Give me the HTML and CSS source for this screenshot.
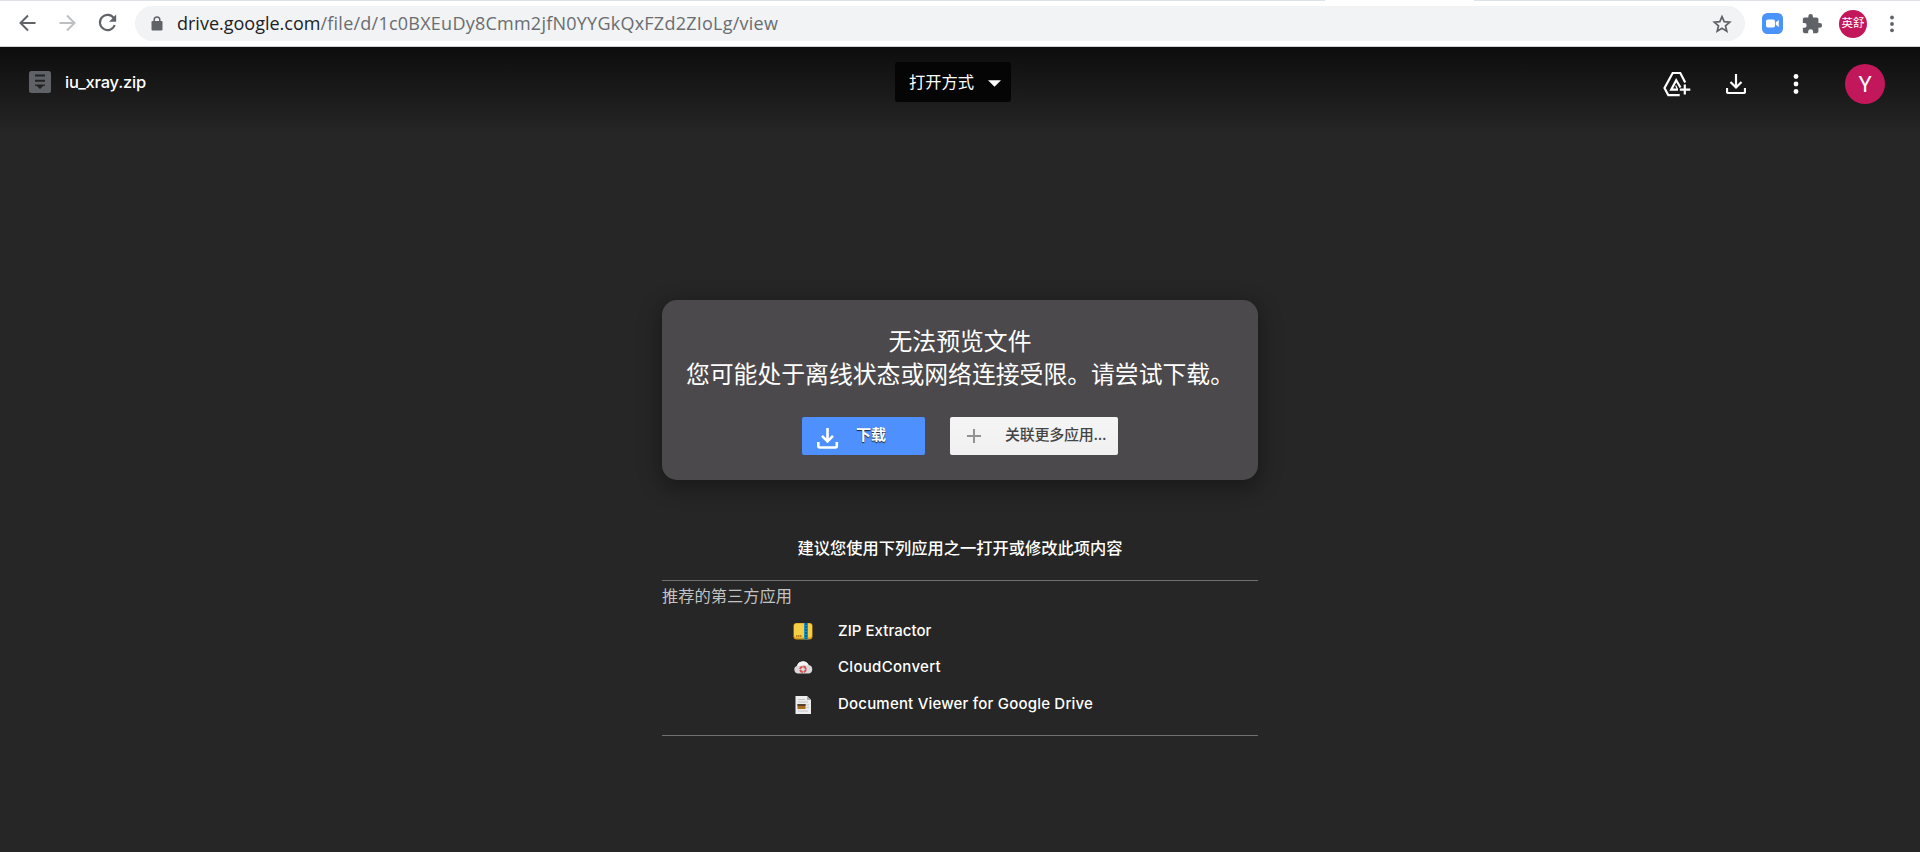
FILE: index.html
```
<!DOCTYPE html>
<html lang="zh-CN">

<head>
    <meta charset="UTF-8">
    <meta name="viewport" content="width=device-width, initial-scale=1.0">
    <title>iu_xray.zip - Google Drive</title>
    <link rel="stylesheet" href="styles.css">
</head>

<body>
    <div class="browser">
        <div class="tab-edge"><span class="edge"></span><span class="edge right"></span></div>
        <div class="toolbar">
            <div class="nav">
                <svg width="24" height="24" viewBox="0 0 24 24" fill="none" stroke="#5f6368" stroke-width="2"><path d="M20.500 12H5.500M13 4.500L5.500 12l7.500 7.500"/></svg>
                <svg width="24" height="24" viewBox="0 0 24 24" fill="none" stroke="#bdc0c3" stroke-width="2"><path d="M4.500 12h15M12 4.500l7.500 7.500-7.500 7.500"/></svg>
                <svg width="24" height="24" viewBox="0 0 24 24" fill="none" stroke="#5f6368" stroke-width="2.100"><path d="M18.800 7.200A7.600 7.600 0 1 0 19.700 14"/><path d="M21.200 3.600v7.200H14z" fill="#5f6368" stroke="none"/></svg>
            </div>
            <div class="address">
                <svg class="lock" width="12" height="15" viewBox="0 0 12 15"><rect x="0.500" y="5" width="11" height="9.500" rx="1.200" fill="#5f6368"/><path d="M3.200 6V3.700a2.800 2.800 0 0 1 5.600 0V6" fill="none" stroke="#5f6368" stroke-width="1.500"/></svg>
                <div class="url"><span class="domain">drive.google.com</span><span class="path">/file/d/1c0BXEuDy8Cmm2jfN0YYGkQxFZd2ZIoLg/view</span></div>
                <svg class="star" width="20" height="20" viewBox="0 0 20 20" fill="none" stroke="#5f6368" stroke-width="1.700"><path d="M10 2.600l2.200 5.100 5.500.5-4.200 3.600 1.300 5.400-4.800-2.900-4.800 2.900 1.300-5.400-4.200-3.600 5.500-.5z"/></svg>
            </div>
            <div class="extensions">
                <svg width="21" height="21" viewBox="0 0 21 21"><rect width="21" height="21" rx="5.500" fill="#4a93f8"/><rect x="4" y="6.500" width="9" height="8" rx="1.800" fill="#fff"/><path d="M13.800 9.300l3-2.300v7l-3-2.300z" fill="#fff"/></svg>
                <svg class="puzzle" width="22" height="22" viewBox="0 0 24 24" fill="#5f6368"><path d="M20.500 11H19V7c0-1.100-.9-2-2-2h-4V3.500a2.500 2.500 0 0 0-5 0V5H4c-1.100 0-2 .9-2 2v3.800h1.500a2.700 2.700 0 0 1 0 5.400H2V20c0 1.100.9 2 2 2h3.800v-1.500a2.700 2.700 0 0 1 5.400 0V22H17c1.100 0 2-.9 2-2v-4h1.500a2.500 2.500 0 0 0 0-5z"/></svg>
                <div class="profile">英舒</div>
                <svg class="more" width="6" height="18" viewBox="0 0 6 18" fill="#5f6368"><circle cx="3" cy="2.500" r="1.900"/><circle cx="3" cy="9" r="1.900"/><circle cx="3" cy="15.300" r="1.900"/></svg>
            </div>
        </div>
    </div>

    <div class="viewer">
        <div class="header">
            <div class="file">
                <svg width="22" height="22" viewBox="0 0 22 22"><rect width="22" height="22" rx="2.500" fill="#5f6368"/><path d="M6 3.500h10v2H6zM6 8.800h10v2H6zM6 13.500h10v1.200h-1.500L11 18l-3.500-3.300H6z" fill="#222"/></svg>
                <span class="filename">iu_xray.zip</span>
            </div>
            <div class="open-with">
                <span>打开方式</span>
                <svg width="13" height="7" viewBox="0 0 13 7"><path d="M0 .3h13L6.500 6.800z" fill="#fff"/></svg>
            </div>
            <div class="actions">
                <svg width="28" height="26" viewBox="0 0 28 26" fill="none" stroke="#fff" stroke-width="2.200"><path d="M22.200 11.500L17.300 2H9.700L1.500 17l3.800 7.200h11.400"/><path d="M15 18.700H8.200l5-9.400 4.300 7.200"/><path d="M12.700 14.500l1.800 4" stroke-width="1.300"/><path d="M21.800 13.500v10M16.800 18.600h10.500"/></svg>
                <svg width="20" height="20" viewBox="0 0 20 20" fill="none" stroke="#fff" stroke-width="2.200"><path d="M10 0v13M4.500 8l5.500 5.500L15.500 8M1 14v3.500c0 .9.600 1.500 1.500 1.500h15c.9 0 1.500-.6 1.500-1.500V14"/></svg>
                <svg width="6" height="20" viewBox="0 0 6 20" fill="#fff"><circle cx="3" cy="2.500" r="2.400"/><circle cx="3" cy="10" r="2.400"/><circle cx="3" cy="17.500" r="2.400"/></svg>
                <div class="avatar">Y</div>
            </div>
        </div>

        <div class="content">
            <div class="card">
                <p class="message">无法预览文件</p>
                <p class="message">您可能处于离线状态或网络连接受限。请尝试下载。</p>
                <div class="buttons">
                    <div class="btn download">
                        <svg width="22" height="22" viewBox="0 0 22 22" fill="none" stroke="#fff" stroke-width="2.600"><path d="M10.500 1v13M5 8.800l5.500 5.500 5.500-5.500M1.300 15v4c0 .9.600 1.500 1.500 1.500h15.500c.9 0 1.500-.6 1.500-1.500v-4"/></svg>
                        <span>下载</span>
                    </div>
                    <div class="btn connect">
                        <svg width="14" height="14" viewBox="0 0 14 14" fill="none" stroke="#929292" stroke-width="2"><path d="M7 0v14M0 7h14"/></svg>
                        <span>关联更多应用...</span>
                    </div>
                </div>
            </div>

            <p class="suggest">建议您使用下列应用之一打开或修改此项内容</p>
            <div class="apps">
                <p class="apps-title">推荐的第三方应用</p>
                <div class="app">
                    <svg width="20" height="20" viewBox="0 0 20 20"><rect x=".5" y="2" width="19" height="16.500" rx="3" fill="#d99a18"/><rect x="1" y="2.500" width="18" height="14" rx="2.500" fill="#f6cf45"/><rect x="11" y="2" width="4" height="16.500" fill="#1791c8"/><path d="M13 2v16" stroke="#075379" stroke-width="1.500" stroke-dasharray="2 1"/><path d="M3 15h6" stroke="#bd8420" stroke-width="2" stroke-dasharray="1.500 .5"/></svg>
                    <span class="zip">ZIP Extractor</span>
                </div>
                <div class="app">
                    <svg width="20" height="20" viewBox="0 0 20 20"><path d="M4.500 15.500a4 4 0 0 1-.5-7.700 6.200 6.200 0 0 1 11.700-.7 4.300 4.300 0 0 1 .3 8.400z" fill="#d9d9d9"/><path d="M4 8a6.200 6.200 0 0 1 11.700-.7" fill="#f4f4f4"/><circle cx="10" cy="11.300" r="2.800" fill="none" stroke="#d94b50" stroke-width="1.800" stroke-dasharray="3.600 .8"/></svg>
                    <span class="cloud">CloudConvert</span>
                </div>
                <div class="app">
                    <svg width="20" height="20" viewBox="0 0 20 20"><path d="M2.500 1H14l4 4v14H2.500z" fill="#ededed"/><path d="M14 1v4h4z" fill="#aaa"/><path d="M5 4.500h7M5 7h10M13 10h3M13 12.500h3M5 16h10" stroke="#c5c5c5"/><rect x="4.500" y="9" width="8" height="5" fill="#a86c1d"/><path d="M4.500 9h8v2h-8z" fill="#54402c"/></svg>
                    <span class="doc">Document Viewer for Google Drive</span>
                </div>
            </div>
        </div>
    </div>
</body>

</html>
```
FILE: styles.css
```
* {
    margin: 0;
    padding: 0;
    box-sizing: border-box;
}

body {
    height: 852px;
    overflow: hidden;
    background-color: #262626;
    font-family: 'Inter', 'Noto Sans CJK SC', sans-serif;
}

svg {
    display: block;
    flex-shrink: 0;
}

.browser {
    height: 47px;
    background-color: #fff;
    border-bottom: 1px solid #d0d2d5;
}

.tab-edge {
    height: 1px;
    display: flex;
    justify-content: space-between;
}

.edge {
    width: 1325px;
    background-color: #dee1e6;
}

.edge.right {
    width: 446px;
}

.toolbar {
    height: 45px;
    padding-left: 15px;
    display: flex;
    align-items: center;
}

.nav {
    width: 120px;
    display: flex;
    gap: 16px;
}

.nav svg {
    margin-top: -1px;
}

.address {
    width: 1610px;
    height: 35px;
    padding: 0 13px 0 16px;
    border-radius: 18px;
    background-color: #f1f3f4;
    display: flex;
    align-items: center;
}

.url {
    margin-left: 14px;
    flex: 1;
    font-family: 'Open Sans', sans-serif;
    font-size: 18px;
    line-height: 33px;
    white-space: nowrap;
}

.domain {
    color: #202124;
}

.path {
    color: #6a6d71;
    letter-spacing: 0.24px;
}

.extensions {
    margin-left: 17px;
    display: flex;
    align-items: center;
}

.puzzle {
    margin-left: 18px;
}

.profile {
    width: 28px;
    height: 28px;
    margin-left: 16px;
    border-radius: 50%;
    background-color: #c2185b;
    color: #fff;
    font-size: 11.500px;
    line-height: 27px;
    text-align: center;
}

.more {
    margin-left: 22px;
}

.viewer {
    height: 805px;
    background: linear-gradient(#0d0d0d, #262626 88px);
}

.header {
    height: 72px;
    padding: 0 35px 0 29px;
    display: grid;
    grid-template-columns: 862px 116px 1fr;
    align-items: center;
    column-gap: 4px;
    color: #fff;
}

.file {
    display: flex;
    align-items: center;
    gap: 14px;
    padding-bottom: 2px;
}

.filename {
    font-size: 16.500px;
    font-weight: 500;
    letter-spacing: -0.2px;
}

.open-with {
    height: 40px;
    margin-bottom: 2px;
    padding: 0 10px 0 14px;
    border-radius: 3px;
    background-color: #050505;
    display: flex;
    align-items: center;
    justify-content: space-between;
    font-size: 16.300px;
    line-height: 38px;
}

.open-with svg {
    margin-top: 3px;
}

.actions {
    padding-top: 2px;
    display: flex;
    align-items: center;
    justify-content: flex-end;
}

.actions svg:nth-child(2) {
    margin-left: 35px;
}

.actions svg:nth-child(3) {
    margin-left: 47px;
}

.avatar {
    width: 40px;
    height: 40px;
    margin-left: 46px;
    border-radius: 50%;
    background-color: #c2185b;
    font-family: 'Roboto', sans-serif;
    font-size: 22px;
    line-height: 42px;
    text-align: center;
}

.content {
    width: 596px;
    margin: 181px auto 0;
    color: #fff;
}

.card {
    height: 180px;
    padding-top: 25px;
    border-radius: 15px;
    background-color: #4c494c;
    box-shadow: 0 6px 20px 4px rgba(0, 0, 0, 0.3);
}

.message {
    font-size: 23.830px;
    line-height: 33px;
    text-align: center;
    white-space: nowrap;
}

.buttons {
    margin-top: 26px;
    display: flex;
    justify-content: center;
    gap: 25px;
}

.btn {
    height: 38px;
    border-radius: 2px;
    display: flex;
    align-items: center;
    font-size: 15px;
    line-height: 34px;
    white-space: nowrap;
}

.btn span {
    padding-bottom: 3px;
}

.download {
    width: 123px;
    padding-left: 15px;
    background-color: #4d90fe;
    font-weight: 700;
    text-shadow: 0 1px 1px #222;
}

.download svg {
    margin: 4px 17px 0 0;
}

.connect {
    width: 168px;
    padding-left: 17px;
    background: linear-gradient(#f5f5f5, #f0f0f0);
    color: #444;
    font-weight: 500;
    letter-spacing: -0.25px;
}

.connect svg {
    margin-right: 24px;
}

.suggest {
    padding: 55px 0 19px;
    font-size: 16.250px;
    font-weight: 500;
    line-height: 26px;
    text-align: center;
}

.apps {
    height: 156px;
    border-top: 1px solid #707070;
    border-bottom: 1px solid #707070;
}

.apps-title {
    padding-top: 2px;
    margin-bottom: 4px;
    color: #c3c3c3;
    font-size: 16.250px;
    line-height: 26px;
}

.app {
    height: 36.700px;
    padding-left: 131px;
    display: flex;
    align-items: center;
    gap: 25px;
    font-size: 15px;
    font-weight: 500;
    white-space: nowrap;
}

.app span {
    padding-bottom: 3px;
}

.app .zip {
    padding-bottom: 1px;
    letter-spacing: 0.05px;
}

.cloud {
    letter-spacing: 0.3px;
}

.doc {
    letter-spacing: 0.2px;
}
```
